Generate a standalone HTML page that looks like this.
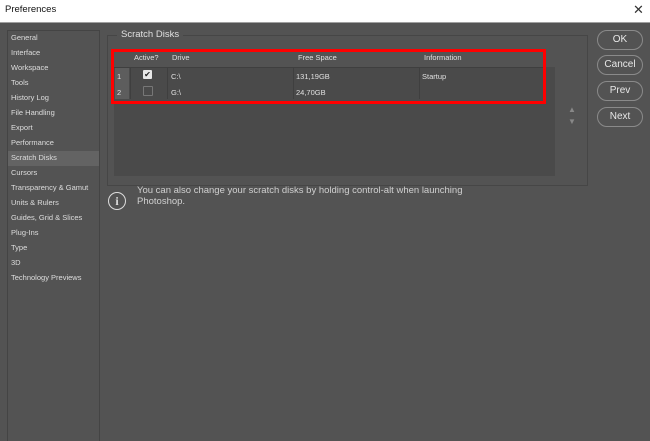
<!DOCTYPE html><html><head><style>
body{margin:0;width:650px;height:433px;overflow:hidden;background:#535353;font-family:"Liberation Sans",sans-serif;position:relative}
.a{position:absolute}
.t{color:#e0e0e0;font-size:7.5px}
.nav div{height:15px;line-height:14px;padding-left:3px;color:#ddd;font-size:7.5px}
.btn{position:absolute;left:597px;width:44px;height:18px;border:1px solid #8a8a8a;border-radius:10px;color:#e8e8e8;font-size:10px;text-align:center;line-height:18px}
</style></head><body>
<div class="a" style="left:0;top:0;width:650px;height:22px;background:#fff;border-bottom:1px solid #a0a0a0"></div>
<div class="a" style="left:5px;top:4px;font-size:9.5px;color:#111">Preferences</div>
<div class="a" style="left:633px;top:2px;font-size:13px;color:#333">✕</div>
<div class="a" style="left:7px;top:30px;width:91px;height:410px;border:1px solid #444;border-bottom:none"></div>
<div class="a nav" style="left:8px;top:31px;width:91px">
<div>General</div><div>Interface</div><div>Workspace</div><div>Tools</div><div>History Log</div><div>File Handling</div><div>Export</div><div>Performance</div><div style="background:#636363">Scratch Disks</div><div>Cursors</div><div>Transparency &amp; Gamut</div><div>Units &amp; Rulers</div><div>Guides, Grid &amp; Slices</div><div>Plug-Ins</div><div>Type</div><div>3D</div><div>Technology Previews</div></div>
<div class="a" style="left:107px;top:35px;width:479px;height:149px;border:1px solid #464646"></div>
<div class="a" style="left:117px;top:29px;padding:0 4px;background:#535353;color:#e0e0e0;font-size:9.5px">Scratch Disks</div>
<div class="a" style="left:114px;top:67px;width:441px;height:109px;background:#4a4a4a"></div>
<div class="a" style="left:115px;top:68px;width:14px;height:31px;background:#5d5d5d"></div>
<div class="a" style="left:130px;top:68px;width:1px;height:31px;background:#3f3f3f"></div>
<div class="a" style="left:167px;top:68px;width:1px;height:31px;background:#3f3f3f"></div>
<div class="a" style="left:293px;top:68px;width:1px;height:31px;background:#3f3f3f"></div>
<div class="a" style="left:419px;top:68px;width:1px;height:31px;background:#3f3f3f"></div>
<div class="a" style="left:114px;top:67px;width:430px;height:1px;background:#3f3f3f"></div>
<div class="a t" style="left:134px;top:53px">Active?</div>
<div class="a t" style="left:172px;top:53px">Drive</div>
<div class="a t" style="left:298px;top:53px">Free Space</div>
<div class="a t" style="left:424px;top:53px">Information</div>
<div class="a t" style="left:117px;top:72px">1</div><div class="a t" style="left:117px;top:88px">2</div>
<div class="a" style="left:143px;top:70px;width:9px;height:9px;background:#e8e8e8;border-radius:1px;color:#222;font-size:8px;line-height:9px;text-align:center">✔</div>
<div class="a" style="left:143px;top:86px;width:8px;height:8px;border:1px solid #777;border-radius:1px;background:#4a4a4a"></div>
<div class="a t" style="left:171px;top:72px">C:\</div><div class="a t" style="left:171px;top:88px">G:\</div>
<div class="a t" style="left:296px;top:72px">131,19GB</div><div class="a t" style="left:296px;top:88px">24,70GB</div>
<div class="a t" style="left:422px;top:72px">Startup</div>
<div class="a" style="left:111px;top:49px;width:429px;height:49px;border:3px solid #f00"></div>
<div class="a" style="left:568px;top:105px;color:#888;font-size:8px">▲</div>
<div class="a" style="left:568px;top:117px;color:#888;font-size:8px">▼</div>
<div class="btn" style="top:30px">OK</div><div class="btn" style="top:55px">Cancel</div><div class="btn" style="top:81px">Prev</div><div class="btn" style="top:107px">Next</div>
<div class="a" style="left:108px;top:192px;width:16px;height:16px;border:1.5px solid #ddd;border-radius:50%;color:#ddd;font-size:12px;font-weight:bold;text-align:center;line-height:16px;font-family:'Liberation Serif',serif">i</div>
<div class="a" style="left:137px;top:186px;color:#d0d0d0;font-size:9.5px;line-height:10.5px">You can also change your scratch disks by holding control-alt when launching<br>Photoshop.</div>
</body></html>
